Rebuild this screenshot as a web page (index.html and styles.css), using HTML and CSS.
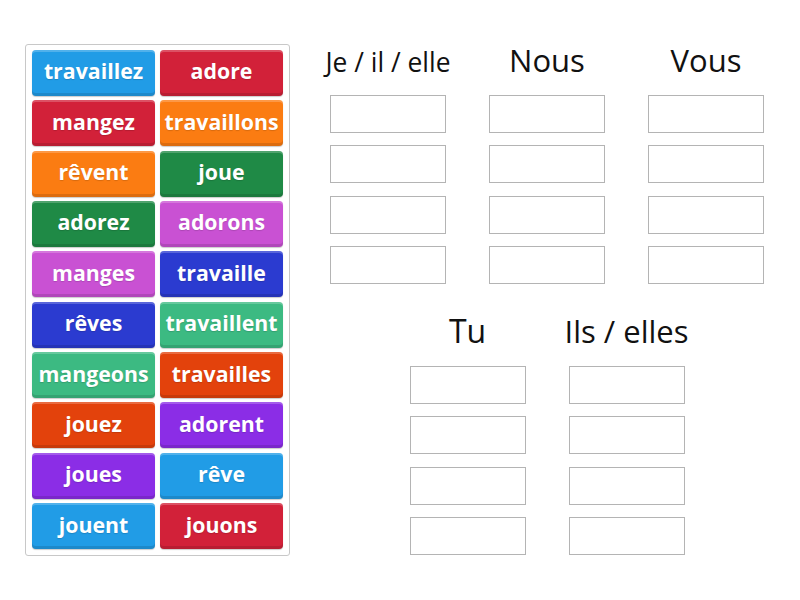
FILE: index.html
```html
<!DOCTYPE html>
<html lang="fr">
<head>
<meta charset="utf-8">
<title>Group sort</title>
<link rel="stylesheet" href="styles.css">
</head>
<body>
<div class="page">
  <div class="panel">
    <div class="tile blue">travaillez</div>
    <div class="tile red">adore</div>
    <div class="tile red">mangez</div>
    <div class="tile orange">travaillons</div>
    <div class="tile orange">rêvent</div>
    <div class="tile green">joue</div>
    <div class="tile green">adorez</div>
    <div class="tile magenta">adorons</div>
    <div class="tile magenta">manges</div>
    <div class="tile royal">travaille</div>
    <div class="tile royal">rêves</div>
    <div class="tile teal">travaillent</div>
    <div class="tile teal">mangeons</div>
    <div class="tile redorange">travailles</div>
    <div class="tile redorange">jouez</div>
    <div class="tile purple">adorent</div>
    <div class="tile purple">joues</div>
    <div class="tile blue">rêve</div>
    <div class="tile blue">jouent</div>
    <div class="tile red">jouons</div>
  </div>
  <div class="groups">
    <div class="group-row">
      <div class="group">
        <div class="head head-je">Je / il / elle</div>
        <div class="slot"></div><div class="slot"></div><div class="slot"></div><div class="slot"></div>
      </div>
      <div class="group">
        <div class="head head-big">Nous</div>
        <div class="slot"></div><div class="slot"></div><div class="slot"></div><div class="slot"></div>
      </div>
      <div class="group">
        <div class="head head-big">Vous</div>
        <div class="slot"></div><div class="slot"></div><div class="slot"></div><div class="slot"></div>
      </div>
    </div>
    <div class="group-row">
      <div class="group">
        <div class="head head-tu">Tu</div>
        <div class="slot"></div><div class="slot"></div><div class="slot"></div><div class="slot"></div>
      </div>
      <div class="group">
        <div class="head head-ils">Ils / elles</div>
        <div class="slot"></div><div class="slot"></div><div class="slot"></div><div class="slot"></div>
      </div>
    </div>
  </div>
</div>
</body>
</html>
```
FILE: styles.css
```css
html, body {
  margin: 0;
  padding: 0;
  background: #ffffff;
  font-family: "Open Sans", "Noto Sans", sans-serif;
}

.page {
  width: 800px;
  height: 600px;
  display: flex;
  align-items: flex-start;
  padding: 44px 0 0 25px;
  box-sizing: border-box;
  gap: 40px;
}

.panel {
  width: 265px;
  height: 512px;
  box-sizing: border-box;
  border: 1px solid #c8c8c8;
  border-radius: 3px;
  padding: 5px 6px 6px 6px;
  display: grid;
  grid-template-columns: 123px 123px;
  grid-template-rows: repeat(10, 1fr);
  column-gap: 5px;
  row-gap: 4.4px;
}

.tile {
  border-radius: 4px;
  color: #ffffff;
  font-weight: 700;
  font-size: 21.3px;
  display: flex;
  align-items: center;
  justify-content: center;
  padding-bottom: 4px;
  box-sizing: border-box;
  white-space: nowrap;
  text-shadow: 0 1px 1px rgba(0, 0, 0, 0.15);
  box-shadow: inset 0 2px 0 rgba(255, 255, 255, 0.22), inset 0 -3px 0 rgba(0, 0, 0, 0.12), 0 1px 1px rgba(0, 0, 0, 0.2);
}

.blue { background: #219ce6; }
.red { background: #d22139; }
.orange { background: #fb7c12; }
.green { background: #1f8a46; }
.magenta { background: #c951d3; }
.royal { background: #2b3bd0; }
.teal { background: #3cba82; }
.redorange { background: #e3420c; }
.purple { background: #8b2de6; }

.groups {
  width: 434px;
  display: flex;
  flex-direction: column;
  gap: 31px;
}

.group-row {
  display: flex;
  justify-content: center;
  gap: 43px;
}

.group {
  width: 116px;
  display: flex;
  flex-direction: column;
  gap: 12.33px;
}

.head {
  height: 51px;
  box-sizing: border-box;
  margin-bottom: -12.33px;
  display: flex;
  align-items: flex-start;
  justify-content: center;
  white-space: nowrap;
  color: #111111;
  font-weight: 400;
  line-height: 1;
}

.head-je { font-size: 26.4px; padding-top: 5px; }
.head-big { font-size: 31px; padding-top: 0.5px; }
.head-tu { font-size: 32px; padding-top: 0; }
.head-ils { font-size: 31px; padding-top: 1.5px; }

.slot {
  height: 38px;
  box-sizing: border-box;
  border: 1px solid #b4b4b4;
  background: #ffffff;
}
```
